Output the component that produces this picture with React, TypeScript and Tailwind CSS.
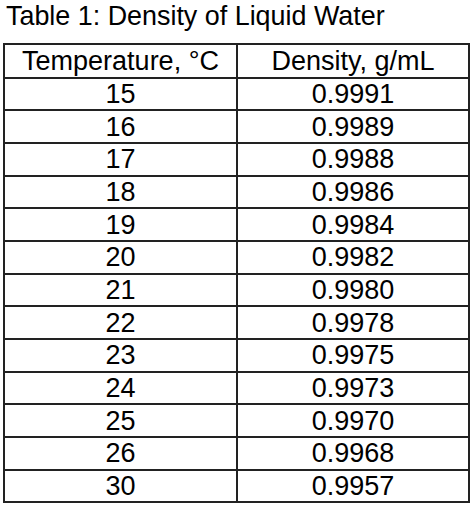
import React from "react";

const rows: [string, string][] = [
  ["15", "0.9991"],
  ["16", "0.9989"],
  ["17", "0.9988"],
  ["18", "0.9986"],
  ["19", "0.9984"],
  ["20", "0.9982"],
  ["21", "0.9980"],
  ["22", "0.9978"],
  ["23", "0.9975"],
  ["24", "0.9973"],
  ["25", "0.9970"],
  ["26", "0.9968"],
  ["30", "0.9957"],
];

export default function App() {
  return (
    <div
      className="w-[474px] h-[507px] bg-white text-black overflow-hidden"
      style={{ fontFamily: '"Liberation Sans", Arial, sans-serif' }}
    >
      <div className="h-[43px] pl-[6px] pt-[1px] text-[26.9px] leading-[31px] whitespace-nowrap">
        Table 1: Density of Liquid Water
      </div>
      <table className="ml-[3px] border-collapse border-2 border-[#555] text-[27px] leading-[30px]">
        <thead>
          <tr className="h-[33.5px]">
            <th className="w-[233px] border-2 border-[#222] font-normal text-center p-0 align-middle">
              Temperature, °C
            </th>
            <th className="w-[232px] border-2 border-[#222] font-normal text-center p-0 align-middle">
              Density, g/mL
            </th>
          </tr>
        </thead>
        <tbody>
          {rows.map(([t, d]) => (
            <tr key={t} className="h-[32.7px]">
              <td className="border-2 border-[#222] text-center p-0 align-middle">{t}</td>
              <td className="border-2 border-[#222] text-center p-0 align-middle">{d}</td>
            </tr>
          ))}
        </tbody>
      </table>
    </div>
  );
}
